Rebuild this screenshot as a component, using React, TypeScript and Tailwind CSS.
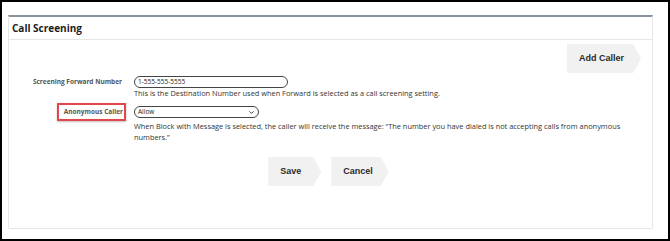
import { ChevronDown } from 'lucide-react';

const arrow =
  '[clip-path:polygon(0_0,calc(100%_-_8px)_0,100%_50%,calc(100%_-_8px)_100%,0_100%)]';

function ArrowButton({ label, className }: { label: string; className: string }) {
  return (
    <button
      className={`h-[29px] bg-[#f1f1f1] text-[9px] font-bold text-[#2b2b2b] font-['Liberation_Sans',Arial,sans-serif] ${arrow} ${className}`}
    >
      {label}
    </button>
  );
}

export default function App() {
  return (
    <div className="w-[670px] h-[241px] border-2 border-black bg-white pt-[13px] pl-[6px] pr-[15px] pb-[10px] font-['Open_Sans',sans-serif]">
      <div className="h-full border border-[#e6e6e6] border-t-2 border-t-[#8a949e] rounded-b-[2px] flex flex-col">
        <div className="h-[23px] border-b border-[#e6e6e6] flex items-center px-[3px]">
          <h2 className="text-[10px] font-bold text-[#1c1c1c]">Call Screening</h2>
        </div>

        <div className="flex justify-end pt-[4px] pr-[11px]">
          <ArrowButton label="Add Caller" className="pl-[12px] pr-[17px]" />
        </div>

        <div className="grid grid-cols-[113px_1fr] gap-x-[12px] mt-[3px] pr-[12px]">
          <div className="h-[12px] flex items-center justify-end">
            <span className="text-[6.5px] font-bold text-[#555]">Screening Forward Number</span>
          </div>
          <div>
            <div className="w-[154px] h-[12px] rounded-full border border-[#444] flex items-center px-[3px] text-[6.5px] text-[#222]">
              1-555-555-5555
            </div>
            <p className="text-[7.4px] leading-[11px] text-[#333]">
              This is the Destination Number used when Forward is selected as a call screening setting.
            </p>
          </div>

          <div className="flex items-center justify-end mt-[4px] h-[18px]">
            <span className="-mr-[4px] h-[18px] flex items-center border-2 border-[#e4474b] pl-[5px] pr-[1px] shadow-[0_1px_2px_rgba(0,0,0,0.25)] text-[6.5px] font-bold text-[#555]">
              Anonymous Caller
            </span>
          </div>
          <div className="mt-[4px]">
            <div className="h-[18px] flex items-center">
              <div className="w-[125px] h-[12px] rounded-full border border-[#444] flex items-center justify-between px-[3px] text-[6.5px] text-[#222]">
                <span>Allow</span>
                <ChevronDown className="w-[7px] h-[7px] text-[#222]" strokeWidth={3} />
              </div>
            </div>
            <p className="text-[7.4px] leading-[11px] text-[#333]">
              When Block with Message is selected, the caller will receive the message: “The number you have dialed is not accepting calls from anonymous numbers.”
            </p>
          </div>
        </div>

        <div className="flex justify-center gap-[10px] mt-[14px] pr-[4px]">
          <ArrowButton label="Save" className="pl-[12px] pr-[20px]" />
          <ArrowButton label="Cancel" className="pl-[12px] pr-[16px]" />
        </div>
      </div>
    </div>
  );
}
